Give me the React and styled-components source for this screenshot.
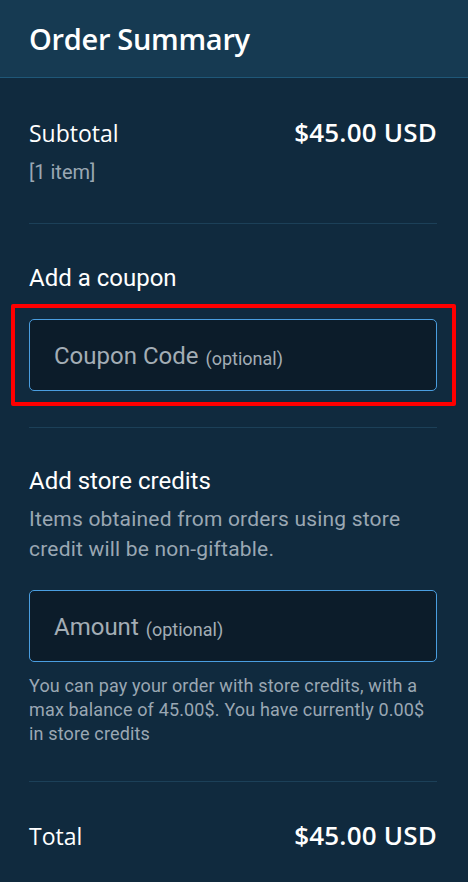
import styled, { createGlobalStyle } from 'styled-components'

const GlobalStyle = createGlobalStyle`
  html, body {
    margin: 0;
    padding: 0;
    background: #102a3e;
  }
  body {
    font-family: Roboto, 'Noto Sans', sans-serif;
  }
`

const Panel = styled.div`
  width: 468px;
  min-height: 882px;
  background: #102a3e;
  color: #ffffff;
`

const Header = styled.div`
  height: 77px;
  background: #163a52;
  border-bottom: 1px solid #1f5778;
  display: flex;
  align-items: center;
  padding: 0 29px;
`

const Title = styled.h1`
  margin: 0;
  font-family: 'Open Sans', sans-serif;
  font-weight: 600;
  font-size: 29px;
  letter-spacing: -0.3px;
  color: #ffffff;
`

const Body = styled.div`
  padding: 0 31px 0 29px;
`

const Section = styled.div`
  padding: ${(p) => p.$pad || '0'};
  border-bottom: ${(p) => (p.$last ? 'none' : '1px solid #1c4058')};
`

const Row = styled.div`
  display: flex;
  justify-content: space-between;
  align-items: baseline;
  line-height: 30px;
`

const RowLabel = styled.span`
  font-family: 'Open Sans', sans-serif;
  font-size: 23px;
  color: #ffffff;
`

const Price = styled.span`
  font-family: 'Open Sans', sans-serif;
  font-weight: 600;
  font-size: 26px;
  letter-spacing: 0.2px;
  color: #ffffff;
`

const Muted = styled.div`
  margin-top: ${(p) => p.$mt || '0'};
  font-size: ${(p) => p.$size || '20px'};
  line-height: ${(p) => p.$lh || '29px'};
  letter-spacing: ${(p) => p.$ls || '0'};
  color: #9aa7b3;
`

const Heading = styled.h2`
  margin: 0;
  font-size: 24px;
  font-weight: 400;
  line-height: 30px;
  color: #ffffff;
`

const Highlight = styled.div`
  margin: 11px -19px 0 -18px;
  padding: 11px 15px 11px 14px;
  border: 4px solid #ff0000;
  border-radius: 2px;
`

const Field = styled.div`
  height: 68px;
  margin-top: ${(p) => p.$mt || '0'};
  border: 1px solid #4a9ee0;
  border-radius: 5px;
  background: #0c1c2a;
  display: flex;
  align-items: center;
  padding: 2px 24px 0;
  color: #a3adb5;
  font-size: 24px;
`

const Optional = styled.span`
  font-size: 18px;
  margin-left: 7px;
  margin-top: 4px;
`

export default function App() {
  return (
    <Panel>
      <GlobalStyle />
      <Header>
        <Title>Order Summary</Title>
      </Header>
      <Body>
        <Section $pad="39px 0 36px">
          <Row>
            <RowLabel>Subtotal</RowLabel>
            <Price>$45.00 USD</Price>
          </Row>
          <Muted $mt="10px">[1 item]</Muted>
        </Section>
        <Section $pad="39px 0 21px">
          <Heading>Add a coupon</Heading>
          <Highlight>
            <Field>
              Coupon Code<Optional>(optional)</Optional>
            </Field>
          </Highlight>
        </Section>
        <Section $pad="38px 0 35px">
          <Heading>Add store credits</Heading>
          <Muted $mt="8px" $size="21px" $lh="30px" $ls="0.2px">
            Items obtained from orders using store credit will be non-giftable.
          </Muted>
          <Field $mt="26px">
            Amount<Optional>(optional)</Optional>
          </Field>
          <Muted $mt="12px" $size="18px" $lh="24px" $ls="0.15px">
            You can pay your order with store credits, with a max balance of
            45.00$. You have currently 0.00$ in store credits
          </Muted>
        </Section>
        <Section $pad="38px 0" $last>
          <Row>
            <RowLabel>Total</RowLabel>
            <Price>$45.00 USD</Price>
          </Row>
        </Section>
      </Body>
    </Panel>
  )
}
